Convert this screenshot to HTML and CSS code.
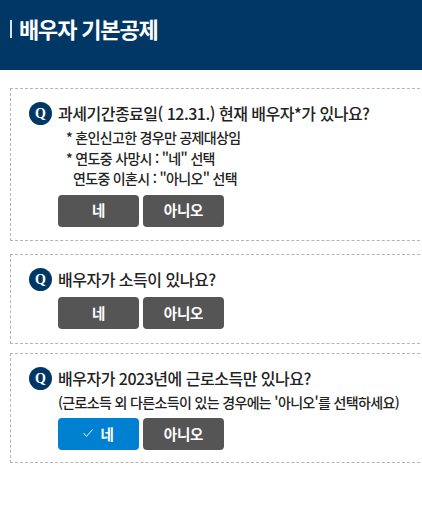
FILE: index.html
```html
<!DOCTYPE html>
<html lang="ko">
<head>
<meta charset="utf-8">
<title>배우자 기본공제</title>
<link rel="stylesheet" href="styles.css">
</head>
<body>
<header class="top"><h1 class="title">배우자 기본공제</h1></header>
<main class="list">
  <section class="card card-a">
    <div class="q"><span class="badge">Q</span><h2 class="qtext">과세기간종료일( 12.31.) 현재 배우자*가 있나요?</h2></div>
    <div class="notes">
      <p class="note">* 혼인신고한 경우만 공제대상임</p>
      <p class="note">* 연도중 사망시 : "네" 선택</p>
      <p class="note indent">연도중 이혼시 : "아니오" 선택</p>
    </div>
    <div class="btns"><button class="btn">네</button><button class="btn">아니오</button></div>
  </section>
  <section class="card card-b">
    <div class="q"><span class="badge">Q</span><h2 class="qtext">배우자가 소득이 있나요?</h2></div>
    <div class="btns"><button class="btn">네</button><button class="btn">아니오</button></div>
  </section>
  <section class="card card-c">
    <div class="q"><span class="badge">Q</span><h2 class="qtext">배우자가 2023년에 근로소득만 있나요?</h2></div>
    <p class="sub">(근로소득 외 다른소득이 있는 경우에는 '아니오'를 선택하세요)</p>
    <div class="btns"><button class="btn on"><svg class="check" viewBox="0 0 10 8" width="10" height="8"><path d="M0.5 4 L3.5 7.5 L9.5 0.5" fill="none" stroke="#fff" stroke-width="0.9"/></svg>네</button><button class="btn">아니오</button></div>
  </section>
</main>
</body>
</html>
```
FILE: styles.css
```css
* { box-sizing: border-box; }
html, body { margin: 0; padding: 0; overflow: hidden; }
body { background: #fff; font-family: "Noto Sans CJK KR", "Noto Sans", sans-serif; color: #222; height: 512px; }
.top { height: 70px; background: #003764; padding: 14px 0 0 10px; }
.title { margin: 0; font-size: 22px; line-height: 29px; font-weight: 700; color: #fff; letter-spacing: -1.15px; display: flex; align-items: center; }
.title::before { content: ""; width: 2px; height: 18px; background: #cfe6f7; margin-right: 7px; }
.list { padding: 18px 0 0 10px; width: 440px; }
.card { border: 1px dashed #b5b5b5; padding: 13px 18px 0; margin-bottom: 13px; }
.card-a { height: 153px; }
.card-b { height: 90px; margin-bottom: 9px; }
.card-c { height: 110px; }
.q { display: flex; align-items: center; gap: 6px; height: 23px; }
.badge { width: 23px; height: 23px; border-radius: 50%; background: #003764; color: #fff; font-size: 14px; font-weight: 700; text-align: center; line-height: 24px; font-family: "Liberation Serif", serif; flex: none; }
.qtext { margin: -2px 0 0; font-size: 16px; font-weight: 500; letter-spacing: -0.5px; color: #222; white-space: nowrap; }
.notes { margin: 2px 0 0 37px; }
.note { margin: 0; font-size: 14px; line-height: 20.5px; font-weight: 500; letter-spacing: -0.68px; white-space: nowrap; }
.indent { padding-left: 7px; }
.sub { margin: 2px 0 0 29px; font-size: 14px; line-height: 20px; font-weight: 500; letter-spacing: -0.65px; white-space: nowrap; }
.btns { display: flex; gap: 4px; margin: 6px 0 0 29px; }
.btn { width: 81px; height: 32px; border: 0; border-radius: 4px; background: #555; color: #fff; font: 700 14.5px "Noto Sans CJK KR", sans-serif; letter-spacing: -0.2px; padding: 0 0 2px; display: flex; align-items: center; justify-content: center; }
.btn.on { background: #0080d0; }
.check { margin-right: 7px; }
```
